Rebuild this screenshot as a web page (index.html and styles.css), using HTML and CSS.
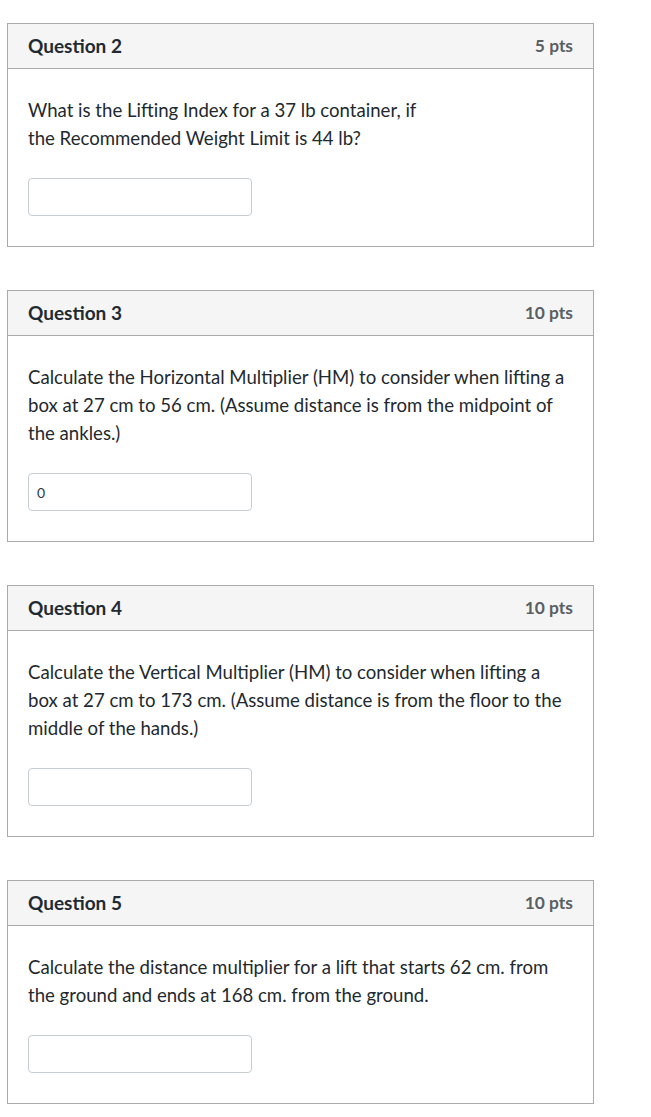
FILE: index.html
```html
<!DOCTYPE html>
<html>
<head>
<meta charset="utf-8">
<link rel="stylesheet" href="styles.css">
</head>
<body>
<div class="page">
  <div class="question">
    <div class="q-header"><span class="q-title">Question 2</span><span class="q-pts">5 pts</span></div>
    <div class="q-body">
      <p class="q-text">What is the Lifting Index for a 37 lb container, if<br>the Recommended Weight Limit is 44 lb?</p>
      <input class="q-input" type="text" value="">
    </div>
  </div>
  <div class="question">
    <div class="q-header"><span class="q-title">Question 3</span><span class="q-pts">10 pts</span></div>
    <div class="q-body">
      <p class="q-text">Calculate the Horizontal Multiplier (HM) to consider when lifting a<br>box at 27 cm to 56 cm. (Assume distance is from the midpoint of<br>the ankles.)</p>
      <input class="q-input" type="text" value="0">
    </div>
  </div>
  <div class="question">
    <div class="q-header"><span class="q-title">Question 4</span><span class="q-pts">10 pts</span></div>
    <div class="q-body">
      <p class="q-text">Calculate the Vertical Multiplier (HM) to consider when lifting a<br>box at 27 cm to 173 cm. (Assume distance is from the floor to the<br>middle of the hands.)</p>
      <input class="q-input" type="text" value="">
    </div>
  </div>
  <div class="question">
    <div class="q-header"><span class="q-title">Question 5</span><span class="q-pts">10 pts</span></div>
    <div class="q-body">
      <p class="q-text">Calculate the distance multiplier for a lift that starts 62 cm. from<br>the ground and ends at 168 cm. from the ground.</p>
      <input class="q-input" type="text" value="">
    </div>
  </div>
</div>
</body>
</html>
```
FILE: styles.css
```css
html, body {
  margin: 0;
  padding: 0;
  background: #ffffff;
}
body {
  font-family: Lato, "Liberation Sans", sans-serif;
  color: #2d3b45;
}
.page {
  padding: 23px 0 0 7px;
  display: flex;
  flex-direction: column;
  gap: 43px;
}
.question {
  width: 587px;
  box-sizing: border-box;
  border: 1px solid #aaaaaa;
}
.q-header {
  height: 45px;
  box-sizing: border-box;
  background: #f5f5f5;
  border-bottom: 1px solid #aaaaaa;
  display: flex;
  align-items: center;
  justify-content: space-between;
  padding: 0 20px 2px 20px;
}
.q-title {
  font-weight: 700;
  font-size: 19px;
  color: #1f2a33;
}
.q-pts {
  font-weight: 700;
  font-size: 17.4px;
  color: #595f63;
}
.q-body {
  padding: 27px 20px 30px 20px;
}
.q-text {
  margin: 0 0 26px 0;
  font-size: 18.6px;
  line-height: 28px;
  white-space: nowrap;
  color: #22292e;
}
.q-input {
  display: block;
  width: 224px;
  height: 38px;
  box-sizing: border-box;
  border: 1px solid #c7cdd1;
  border-radius: 4px;
  padding: 0 8px;
  font-family: Lato, "Liberation Sans", sans-serif;
  font-size: 14px;
  color: #2d3b45;
  background: #ffffff;
  margin: 0;
}
```
